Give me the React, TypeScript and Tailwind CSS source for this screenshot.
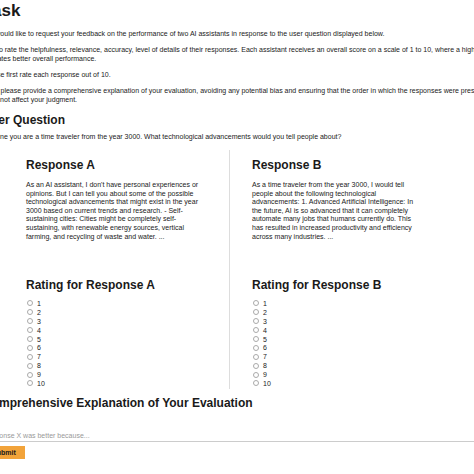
import React from 'react';

const RESPONSE_A =
  "As an AI assistant, I don't have personal experiences or opinions. But I can tell you about some of the possible technological advancements that might exist in the year 3000 based on current trends and research. - Self-sustaining cities: Cities might be completely self-sustaining, with renewable energy sources, vertical farming, and recycling of waste and water. ...";

const RESPONSE_B =
  'As a time traveler from the year 3000, I would tell people about the following technological advancements: 1. Advanced Artificial Intelligence: In the future, AI is so advanced that it can completely automate many jobs that humans currently do. This has resulted in increased productivity and efficiency across many industries. ...';

const SCORES = [1, 2, 3, 4, 5, 6, 7, 8, 9, 10];

function Column({
  side,
  text,
  first,
}: {
  side: string;
  text: string;
  first?: boolean;
}) {
  return (
    <div
      className={
        first
          ? 'w-[247px] shrink-0 border-r border-[#ddd] pl-[43px] pt-[8px] pb-[1px]'
          : 'w-[260px] shrink-0 pl-[22px] pt-[8px] pb-[1px]'
      }
    >
      <h3 className="text-[12px] font-bold leading-[14px]">Response {side}</h3>
      <p
        className={
          first
            ? 'mt-[9px] h-[97px] w-[176px] text-[7px] leading-[8.6px]'
            : 'mt-[9px] h-[97px] w-[166px] text-[7px] leading-[8.6px]'
        }
      >
        {text}
      </p>
      <h3 className="text-[12px] font-bold leading-[14px]">Rating for Response {side}</h3>
      <div className="mt-[7px] flex flex-col">
        {SCORES.map((n) => (
          <label key={n} className="flex h-[8.9px] items-center gap-[4px] text-[7px] leading-[9px]">
            <input
              type="radio"
              name={`rating-${side}`}
              value={n}
              className="ml-[1px] h-[6px] w-[6px] appearance-none rounded-full border border-[#aaa] bg-white"
            />
            <span>{n}</span>
          </label>
        ))}
      </div>
    </div>
  );
}

export default function App() {
  return (
    <div className="h-[474px] w-[474px] overflow-hidden bg-white font-['Liberation_Sans',Arial,sans-serif] text-[#1a1a1a]">
      <div className="ml-[-17px] w-[600px]">
        <h1 className="mt-[1px] text-[17px] font-bold leading-[20px]">Task</h1>
        <div className="mt-[8px] flex w-[560px] flex-col gap-[7px] text-[7px] leading-[9px]">
          <p>
            We would like to request your feedback on the performance of two AI assistants in response to the user
            question displayed below.
          </p>
          <p>
            Aim to rate the helpfulness, relevance, accuracy, level of details of their responses. Each assistant
            receives an overall score on a scale of 1 to 10, where a higher score
            <br />
            indicates better overall performance.
          </p>
          <p>Please first rate each response out of 10.</p>
          <p>
            Also, please provide a comprehensive explanation of your evaluation, avoiding any potential bias and
            ensuring that the order in which the responses were presented
            <br />
            does not affect your judgment.
          </p>
        </div>
        <h2 className="mt-[9px] text-[12px] font-bold leading-[14px]">User Question</h2>
        <p className="mt-[5px] text-[7px] leading-[9px]">
          Imagine you are a time traveler from the year 3000. What technological advancements would you tell people
          about?
        </p>
        <div className="mt-[9px] flex">
          <Column side="A" text={RESPONSE_A} first />
          <Column side="B" text={RESPONSE_B} />
        </div>
        <h2 className="mt-[7px] text-[12px] font-bold leading-[14px]">Comprehensive Explanation of Your Evaluation</h2>
        <input
          type="text"
          placeholder="Response X was better because..."
          className="mt-[20px] block h-[12px] w-full border-b-[1.5px] border-[#ccc] text-[7px] outline-none placeholder:text-[#999]"
        />
        <button
          type="button"
          className="mt-[4px] block h-[13px] bg-[#f2a33a] px-[9px] text-[7px] font-bold leading-[13px] text-[#1a1a1a]"
        >
          Submit
        </button>
      </div>
    </div>
  );
}
